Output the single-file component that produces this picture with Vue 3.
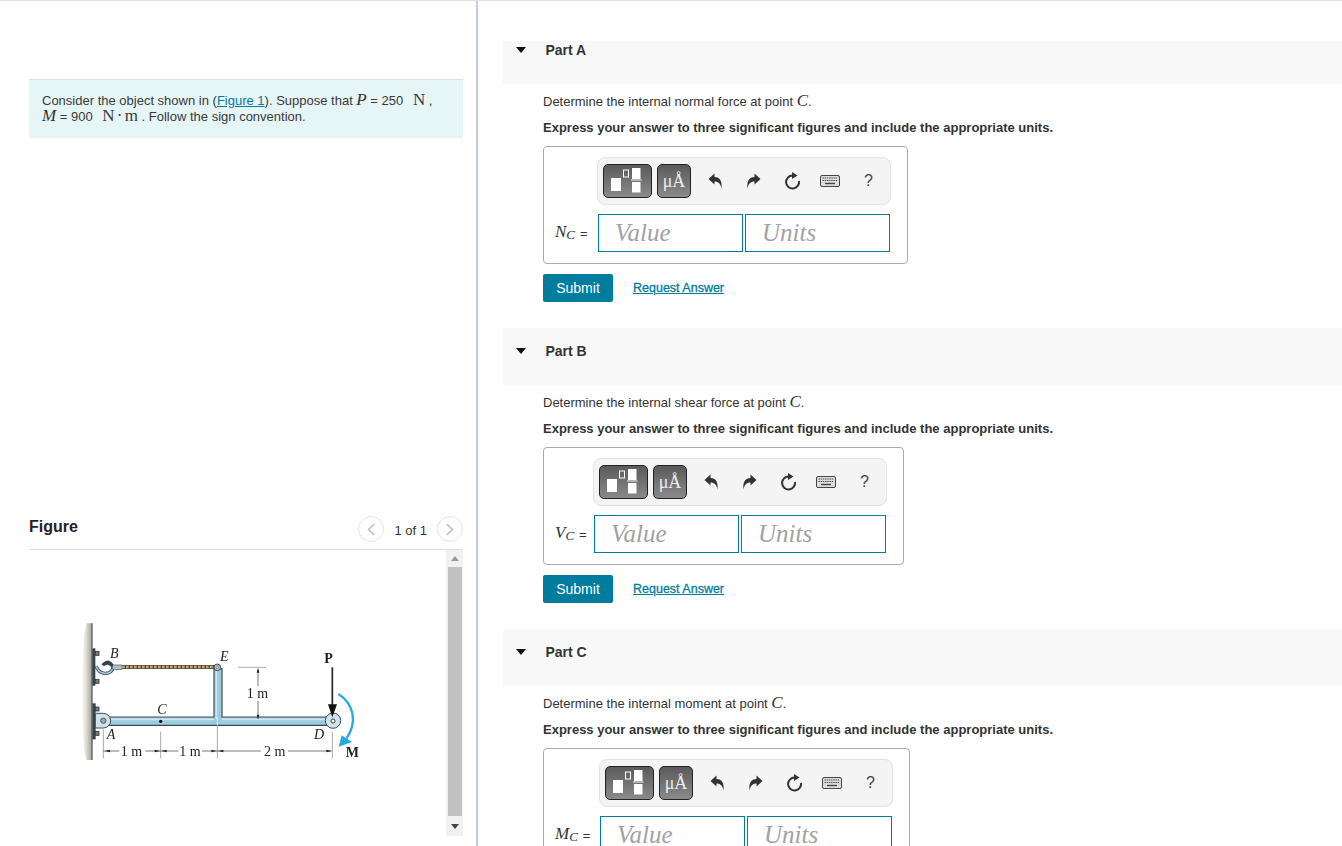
<script setup>
const parts = [
  { name: 'Part A', desc: 'normal force', sym: 'N', head: 'first', labelW: 43 },
  { name: 'Part B', desc: 'shear force', sym: 'V', head: '', labelW: 39 },
  { name: 'Part C', desc: 'moment', sym: 'M', head: '', labelW: 45 },
]
</script>

<template>
  <div class="page">
    <aside class="left">
      <div class="intro">
        Consider the object shown in (<a class="link">Figure 1</a>). Suppose that
        <i class="mi">P</i> = 250 <span class="mu">N</span> ,<br />
        <i class="mi">M</i> = 900 <span class="mu dotted">N · m</span> . Follow the sign convention.
      </div>
      <div class="fig-head">
        <strong>Figure</strong>
        <div class="pager">
          <span class="circle"><svg viewBox="0 0 12 16" width="10" height="13"><path d="M10 1.5 3 8l7 6.5" fill="none" stroke="#b8c4cc" stroke-width="2" /></svg></span>
          <span class="count">1 of 1</span>
          <span class="circle"><svg viewBox="0 0 12 16" width="10" height="13"><path d="M2 1.5 9 8l-7 6.5" fill="none" stroke="#b8c4cc" stroke-width="2" /></svg></span>
        </div>
      </div>
      <div class="fig-body">
        <div class="fig-image">
          <svg class="diagram" viewBox="0 0 900 510" width="300" height="170">
            <defs>
              <linearGradient id="wall" x1="0" x2="1" y1="0" y2="0">
                <stop offset="0" stop-color="#fff" />
                <stop offset="0.45" stop-color="#dcdcd4" />
                <stop offset="1" stop-color="#a3a298" />
              </linearGradient>
            </defs>
            <path d="M66 40V450H50C30 400 30 100 50 40Z" fill="url(#wall)" />
            <path d="M66 40V450" stroke="#5e5e5e" stroke-width="4" />
            <!-- plates and bolts -->
            <rect x="67" y="115" width="9" height="112" fill="#36444c" />
            <rect x="67" y="280" width="10" height="108" fill="#36444c" />
            <g fill="#6d7a80" stroke="#2f3a40" stroke-width="2.5">
              <rect x="76" y="124" width="11" height="12" />
              <rect x="76" y="208" width="11" height="12" />
              <rect x="76" y="291" width="11" height="12" />
              <rect x="76" y="364" width="11" height="12" />
            </g>
            <!-- hook -->
            <path d="M78 168C88 196 122 198 130 172C122 156 106 156 98 166" fill="none" stroke="#33454f" stroke-width="10" />
            <path d="M78 168C88 196 122 198 130 172" fill="none" stroke="#a4cadb" stroke-width="5" />
            <path d="M104 160C112 152 122 154 126 166" fill="none" stroke="#33454f" stroke-width="7" />
            <rect x="128" y="165" width="28" height="13" fill="#a9c0cc" stroke="#4c5a62" stroke-width="2" />
            <!-- rope -->
            <path d="M156 171H436" stroke="#5e4c32" stroke-width="12" />
            <path d="M156 171H436" stroke="#bda680" stroke-width="8" stroke-dasharray="8 4" />
            <!-- frame -->
            <path d="M432 176H456V321H785V346H100V321H432Z" fill="#9ccbe0" stroke="#3a4c55" stroke-width="3.5" />
            <path d="M110 328H432M456 328H770M439 176V326" stroke="#cfe6f0" stroke-width="5" fill="none" />
            <path d="M442 322V346" stroke="#d8ecf4" stroke-width="3" />
            <!-- pin E -->
            <circle cx="442" cy="172" r="10" fill="#a8c4d0" stroke="#3f4d55" stroke-width="3" />
            <circle cx="442" cy="172" r="4" fill="#d8d8d8" stroke="#555" stroke-width="1.5" />
            <!-- support A -->
            <path d="M76 310H100A22 22 0 0 1 100 354H76Z" fill="#d2e2ea" stroke="#3a4c55" stroke-width="3" />
            <circle cx="100" cy="332" r="8" fill="#9aa8ae" stroke="#3a4c55" stroke-width="2.5" />
            <!-- pulley D -->
            <circle cx="789" cy="332" r="23" fill="#d2e2ea" stroke="#3a4c55" stroke-width="3" />
            <circle cx="789" cy="333" r="6" fill="#fff" stroke="#2c3c45" stroke-width="3" />
            <circle cx="272" cy="334" r="5" fill="#111" />
            <!-- dimensions -->
            <g stroke="#9a9a9a" stroke-width="2.5" fill="none">
              <path d="M100 358V445M272 365V445M442 346V445M787 365V445M505 172H588" />
            </g>
            <g stroke="#333" stroke-width="2" fill="none">
              <path d="M100 423H148M226 423H325M396 423H572M654 423H785M564 178V228M564 272V326" />
            </g>
            <g fill="#222">
              <path d="M104 423l16-4v8zM270 423l-16-4v8zM274 423l16-4v8zM440 423l-16-4v8zM444 423l16-4v8zM785 423l-16-4v8z" />
              <path d="M564 174l-4 14h8zM564 328l-4-14h8z" />
            </g>
            <!-- load -->
            <path d="M787 172V292" stroke="#222" stroke-width="5" />
            <path d="M774 283H801L787 322Z" fill="#111" />
            <path d="M805 252C850 280 865 335 828 388" fill="none" stroke="#29abe2" stroke-width="7" />
            <path d="M806 410 815 376 846 396Z" fill="#29abe2" />
            <g class="fig-label">
              <text x="120" y="143" class="it">B</text>
              <text x="450" y="152" class="it">E</text>
              <text x="262" y="311" class="it">C</text>
              <text x="110" y="387" class="it">A</text>
              <text x="732" y="387" class="it">D</text>
              <text x="763" y="160" class="bd">P</text>
              <text x="827" y="441" class="bd">M</text>
              <text x="152" y="437">1 m</text>
              <text x="328" y="437">1 m</text>
              <text x="582" y="437">2 m</text>
              <text x="530" y="264">1 m</text>
            </g>
          </svg>
        </div>
        <div class="scrollbar">
          <span class="arrow up"></span>
          <span class="thumb"></span>
          <span class="arrow down"></span>
        </div>
      </div>
    </aside>

    <main class="right">
      <section v-for="p in parts" :key="p.name" class="part">
        <header class="part-head" :class="p.head">
          <span class="tri"></span>
          <span class="part-title">{{ p.name }}</span>
        </header>
        <div class="part-body">
          <p class="desc">Determine the internal {{ p.desc }} at point <i class="mi">C</i>.</p>
          <p class="instr">Express your answer to three significant figures and include the appropriate units.</p>
          <div class="answer">
            <span></span>
            <div class="toolbar">
              <span class="tbtn wide">
                <svg viewBox="1 1 47 32" width="47" height="32">
                  <rect x="8" y="14" width="10" height="13" fill="#fff" />
                  <rect x="20.500" y="6" width="5" height="7" fill="none" stroke="#fff" stroke-width="1" />
                  <rect x="29" y="4" width="8.500" height="11" fill="#fff" />
                  <rect x="28" y="15.500" width="10.500" height="1" fill="#fff" />
                  <rect x="29" y="18" width="8.500" height="10.500" fill="#fff" />
                </svg>
              </span>
              <span class="tbtn unit">μÅ</span>
              <svg class="tic t1" viewBox="0 0 16 16" width="16" height="16"><path d="M1.5 6 7.5.5V4C12 4 15.500 7 14.500 15.500 13.500 10.500 11.500 8.500 7.500 8.500V11.500Z" fill="#333" /></svg>
              <svg class="tic" viewBox="0 0 16 16" width="16" height="16"><path d="M14.500 6 8.500.5V4C4 4 .5 7 1.500 15.500 2.500 10.500 4.500 8.500 8.500 8.500V11.500Z" fill="#333" /></svg>
              <svg class="tic rs" viewBox="0 0 18 18" width="18" height="18"><path d="M8.500 3.500A6.500 6.500 0 1 0 15 9" fill="none" stroke="#333" stroke-width="2" /><path d="M8 0 13.500 3.500 8 7Z" fill="#333" /></svg>
              <svg class="tic kb" viewBox="0 0 20 12" width="20" height="12"><rect x="0.5" y="0.5" width="19" height="11" rx="1.5" fill="#ddd" stroke="#444" /><path d="M2.500 3h15M2.500 5.500h15" stroke="#444" stroke-dasharray="1.400 .8" /><path d="M5 8.500h10" stroke="#444" stroke-width="1.400" /></svg>
              <span class="help">?</span>
            </div>
            <label class="ans-label" :style="{ width: p.labelW + 'px' }"><i class="mi sym">{{ p.sym }}<sub>C</sub></i> =</label>
            <div class="inputs">
              <span class="field">Value</span>
              <span class="field">Units</span>
            </div>
          </div>
          <div class="actions">
            <button class="submit">Submit</button>
            <a class="request">Request Answer</a>
          </div>
        </div>
      </section>
    </main>
  </div>
</template>

<style>
html, body { margin: 0; height: 846px; overflow: hidden; background: #fff; }
</style>

<style scoped>
.page {
  display: flex;
  width: 1342px;
  height: 846px;
  overflow: hidden;
  border-top: 1px solid #e2e2e2;
  box-sizing: border-box;
  font-family: "Liberation Sans", Arial, sans-serif;
  color: #333;
  font-size: 13px;
}
.left {
  width: 476px;
  flex: none;
  border-right: 2px solid #bccfe0;
  padding-top: 78px;
  display: flex;
  flex-direction: column;
}
.intro {
  margin: 0 13px 0 29px;
  height: 59px;
  box-sizing: border-box;
  background: #e6f5f6;
  border-top: 1px solid #d6e4e6;
  padding: 13px 13px 0;
  line-height: 16px;
  color: #3a3a3a;
}
.link { color: #007c9e; text-decoration: underline; }
.mi { font-family: "Liberation Serif", serif; font-style: italic; font-size: 17px; line-height: 0; color: #333; }
.mu { font-family: "Liberation Serif", serif; font-size: 17px; line-height: 0; margin-left: 6px; }
.mu.dotted { word-spacing: -2px; }
.fig-head {
  margin: 378px 13px 0 29px;
  height: 33px;
  display: flex;
  align-items: flex-start;
  justify-content: space-between;
  border-bottom: 1px solid #dedede;
}
.fig-head strong { font-size: 16px; line-height: 18px; margin-top: 2px; color: #222; }
.pager { display: flex; align-items: center; gap: 10px; height: 26px; }
.circle {
  width: 26px;
  height: 26px;
  border: 1px solid #e4e4e4;
  border-radius: 50%;
  box-sizing: border-box;
  display: flex;
  align-items: center;
  justify-content: center;
}
.count { font-size: 13px; color: #333; line-height: 26px; padding-top: 3px; }
.fig-body { flex: 1; display: flex; margin: 0 13px 0 29px; min-height: 0; }
.fig-image { flex: 1; padding: 60px 0 0 41px; }
.diagram { display: block; filter: blur(.35px); }
.fig-label text { font-family: "Liberation Serif", serif; font-size: 42px; fill: #222; }
.fig-label .it { font-style: italic; }
.fig-label .bd { font-weight: bold; }
.scrollbar {
  width: 17px;
  background: #f1f1f1;
  display: flex;
  flex-direction: column;
  align-items: center;
  height: 286px;
}
.arrow { width: 0; height: 0; border: 4px solid transparent; margin: 0; }
.arrow.up { border-bottom: 5px solid #999; border-top: 0; margin: 6px 0; }
.arrow.down { border-top: 5px solid #444; border-bottom: 0; margin: 8px 0 7px; }
.thumb { width: 14px; flex: 1; background: #c1c1c1; }
.right { flex: 1; min-width: 0; padding-top: 40px; }
.part { margin-bottom: 26px; }
.part-head {
  margin-left: 25px;
  height: 57px;
  padding-top: 14px;
  box-sizing: border-box;
  background: #f8f8f8;
  position: relative;
}
.part-head.first { height: 43px; padding-top: 0; }
.tri {
  position: absolute;
  left: 13px;
  top: 20px;
  width: 0;
  height: 0;
  border-left: 5.5px solid transparent;
  border-right: 5.5px solid transparent;
  border-top: 6px solid #111;
}
.part-head.first .tri { top: 6px; }
.part-title { position: absolute; left: 42.5px; margin-top: -0.5px; font-weight: bold; font-size: 14px; line-height: 18px; color: #333; }
.part-body { padding-left: 65px; }
.desc { margin: 9px 0 0; height: 17px; line-height: 17px; font-size: 13px; }
.instr { margin: 9px 0 0; height: 17px; line-height: 17px; font-size: 13px; font-weight: bold; }
.answer {
  display: grid;
  width: fit-content;
  grid-template-columns: auto auto;
  row-gap: 9px;
  margin-top: 10px;
  padding: 10px 17px 11px 11px;
  border: 1px solid #aaa;
  border-radius: 4px;
}
.toolbar {
  width: 294px;
  height: 48px;
  margin: 0 -1px;
  box-sizing: border-box;
  border: 1px solid #e2e2e2;
  border-radius: 8px;
  background: #f4f4f4;
  display: flex;
  align-items: center;
  padding-left: 5px;
}
.tbtn {
  height: 34px;
  box-sizing: border-box;
  border: 1px solid #222;
  border-radius: 5px;
  background: linear-gradient(#5a5a5a, #8a8a8a);
  display: flex;
  align-items: center;
  justify-content: center;
}
.tbtn.wide { width: 49px; }
.tbtn.unit {
  width: 34px;
  margin-left: 5px;
  color: #eee;
  font-family: "Liberation Serif", serif;
  font-size: 18px;
}
.tic { flex: none; margin-left: 23px; }
.tic.t1 { margin-left: 16px; }
.tic.rs { margin-left: 22px; }
.tic.kb { margin-left: 18px; }
.help { margin-left: 24px; font-size: 16px; color: #444; }
.ans-label { display: flex; align-items: center; white-space: nowrap; font-size: 13px; }
.sym { font-size: 17px; margin-right: 5px; }
.sym sub { font-size: 13px; vertical-align: -2px; line-height: 0; }
.inputs { display: flex; gap: 2px; }
.field {
  width: 145px;
  height: 38px;
  box-sizing: border-box;
  border: 1px solid #007c9e;
  padding: 0 16px;
  font-family: "Liberation Serif", serif;
  font-style: italic;
  font-size: 25px;
  line-height: 35px;
  color: #a2a2a2;
}
.actions { display: flex; align-items: center; margin-top: 10px; gap: 20px; }
.submit {
  width: 70px;
  height: 28px;
  border: 0;
  border-radius: 2px;
  background: #007c9e;
  color: #fff;
  font-family: inherit;
  font-size: 14px;
  padding: 0;
}
.request { color: #007c9e; font-size: 12.500px; -webkit-text-stroke: .3px #007c9e; text-decoration: underline; }
</style>
